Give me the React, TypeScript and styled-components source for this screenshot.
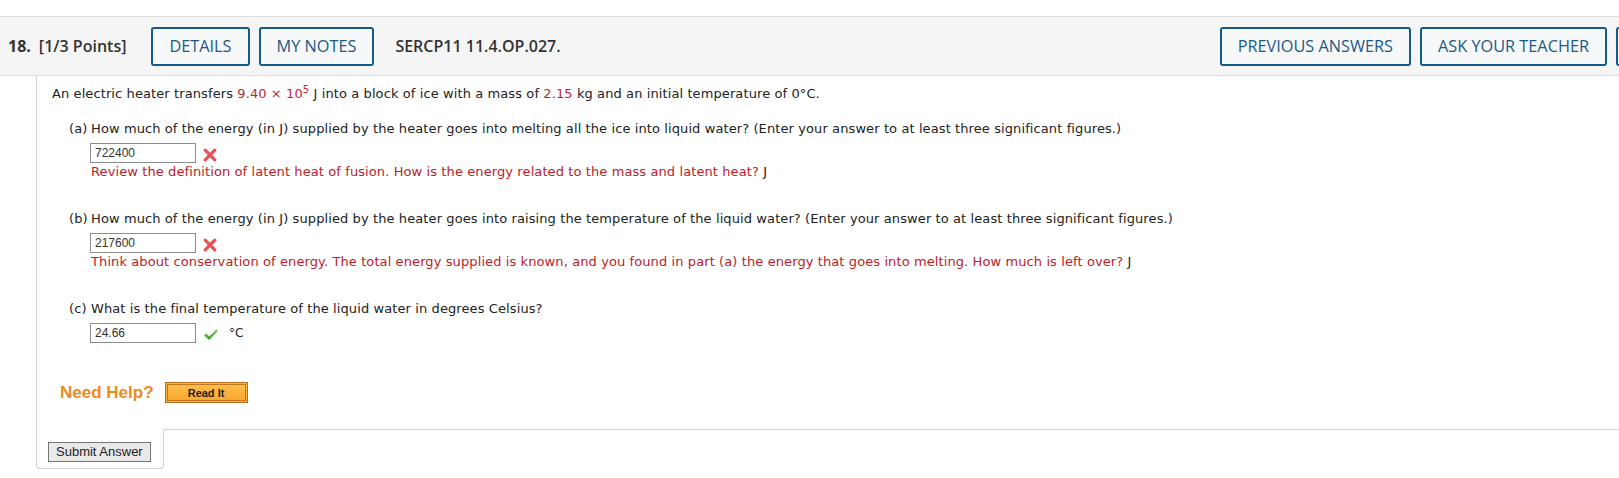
import { FC } from "react";
import styled, { createGlobalStyle } from "styled-components";

const GlobalStyle = createGlobalStyle`
  html, body {
    margin: 0;
    padding: 0;
    background: #ffffff;
  }
  body {
    font-family: "DejaVu Sans", Verdana, sans-serif;
    color: #222;
  }
`;

type Part = {
  label: string;
  question: string;
  value: string;
  correct: boolean;
  unit?: string;
  feedback?: string;
};

const parts: Part[] = [
  {
    label: "(a)",
    question:
      "How much of the energy (in J) supplied by the heater goes into melting all the ice into liquid water? (Enter your answer to at least three significant figures.)",
    value: "722400",
    correct: false,
    feedback:
      "Review the definition of latent heat of fusion. How is the energy related to the mass and latent heat?",
    unit: "J",
  },
  {
    label: "(b)",
    question:
      "How much of the energy (in J) supplied by the heater goes into raising the temperature of the liquid water? (Enter your answer to at least three significant figures.)",
    value: "217600",
    correct: false,
    feedback:
      "Think about conservation of energy. The total energy supplied is known, and you found in part (a) the energy that goes into melting. How much is left over?",
    unit: "J",
  },
  {
    label: "(c)",
    question: "What is the final temperature of the liquid water in degrees Celsius?",
    value: "24.66",
    correct: true,
    unit: "°C",
  },
];

const CrossIcon: FC = () => (
  <svg width="14" height="14" viewBox="0 0 14 14">
    <path
      d="M2.2 2.2 L11.8 11.8 M11.8 2.2 L2.2 11.8"
      stroke="#e65257"
      strokeWidth="3.2"
      strokeLinecap="round"
    />
  </svg>
);

const CheckIcon: FC = () => (
  <svg width="16" height="14" viewBox="0 0 16 14">
    <defs>
      <linearGradient id="chk" x1="0" y1="0" x2="0" y2="1">
        <stop offset="0" stopColor="#86d562" />
        <stop offset="1" stopColor="#3f9a2c" />
      </linearGradient>
    </defs>
    <path
      d="M1 7.5 L3.4 5.4 L6.2 8.2 L13.4 1.2 L15 3 L6.2 12 Z"
      fill="url(#chk)"
    />
  </svg>
);

const App: FC = () => (
  <>
    <GlobalStyle />
    <Page>
      <Header>
        <Number>18.</Number>
        <Points>[1/3 Points]</Points>
        <HeaderButton>DETAILS</HeaderButton>
        <HeaderButton>MY NOTES</HeaderButton>
        <Code>SERCP11 11.4.OP.027.</Code>
        <RightGroup>
          <HeaderButton>PREVIOUS ANSWERS</HeaderButton>
          <HeaderButton>ASK YOUR TEACHER</HeaderButton>
          <HeaderButton $width={180}>PRACTICE ANOTHER</HeaderButton>
        </RightGroup>
      </Header>

      <Card>
        <Content>
          <Intro>
            An electric heater transfers <Given>9.40 × 10<sup>5</sup></Given> J
            into a block of ice with a mass of <Given>2.15</Given> kg and an
            initial temperature of 0°C.
          </Intro>

          {parts.map((p) => (
            <PartBlock key={p.label}>
              <Label>{p.label}</Label>
              <div>
                <Question>{p.question}</Question>
                <AnswerRow>
                  <AnswerInput defaultValue={p.value} readOnly />
                  <Mark>{p.correct ? <CheckIcon /> : <CrossIcon />}</Mark>
                  {p.correct && <Unit>{p.unit}</Unit>}
                </AnswerRow>
                {p.feedback && (
                  <Feedback>
                    {p.feedback} <FeedbackUnit>{p.unit}</FeedbackUnit>
                  </Feedback>
                )}
              </div>
            </PartBlock>
          ))}

          <HelpRow>
            <HelpTitle>Need Help?</HelpTitle>
            <ReadIt>
              <ReadItInner>Read It</ReadItInner>
            </ReadIt>
          </HelpRow>
        </Content>

        <Footer>
          <SubmitTab>
            <SubmitButton>Submit Answer</SubmitButton>
          </SubmitTab>
          <FooterRest />
        </Footer>
      </Card>
    </Page>
  </>
);

export default App;

const Page = styled.div`
  width: 1619px;
  height: 478px;
  overflow: hidden;
  padding-top: 16px;
  box-sizing: border-box;
`;

const Header = styled.div`
  display: flex;
  align-items: center;
  height: 58px;
  background: #f5f5f5;
  border-top: 1px solid #dedede;
  border-bottom: 1px solid #dedede;
  padding-left: 8px;
  overflow: hidden;
  font-family: "Open Sans", sans-serif;
  font-size: 16px;
  font-weight: 600;
  color: #333;
`;

const Number = styled.span`
  font-weight: 700;
  margin-right: 8px;
`;

const Points = styled.span`
  margin-right: 25px;
`;

const HeaderButton = styled.button<{ $width?: number }>`
  flex-shrink: 0;
  height: 39px;
  width: ${(p) => (p.$width ? `${p.$width}px` : "auto")};
  padding: 0 16px;
  margin-right: 9px;
  border: 2px solid #135c89;
  border-radius: 3px;
  background: #f7f8f9;
  font-family: "Open Sans", sans-serif;
  font-size: 16.3px;
  font-weight: 500;
  color: #1b5a87;
  white-space: nowrap;
`;

const Code = styled.span`
  margin-left: 12px;
  white-space: nowrap;
`;

const RightGroup = styled.div`
  display: flex;
  margin-left: auto;
  margin-right: -186px;
  flex-shrink: 0;
`;

const Card = styled.div`
  margin-left: 36px;
`;

const Content = styled.div`
  border-left: 1px solid #d2d2d2;
  padding: 10px 0 26px 15px;
  font-family: "DejaVu Sans", Verdana, sans-serif;
  font-size: 13px;
  line-height: 16px;
  letter-spacing: 0.1px;
  color: #222;
`;

const Intro = styled.p`
  margin: 0;

  sup {
    font-size: 10px;
    line-height: 0;
    vertical-align: 5px;
  }
`;

const Given = styled.span`
  color: #c1272d;
`;

const PartBlock = styled.div`
  display: grid;
  grid-template-columns: 22px 1fr;
  margin-top: 19px;
  margin-left: 17px;

  & + & {
    margin-top: 30px;
  }
`;

const Label = styled.span``;

const Question = styled.div``;

const AnswerRow = styled.div`
  display: flex;
  align-items: center;
  margin-top: 6px;
  margin-left: -1px;
  letter-spacing: 0;
`;

const AnswerInput = styled.input`
  width: 106px;
  height: 20px;
  box-sizing: border-box;
  border: 1px solid #8c8c8c;
  padding: 0 4px;
  font-family: "Liberation Sans", Arial, sans-serif;
  font-size: 12px;
  color: #333;
  outline: none;
`;

const Mark = styled.span`
  display: flex;
  margin-left: 7px;
  margin-top: 3px;
`;

const Unit = styled.span`
  margin-left: 10px;
  font-size: 12px;
`;

const Feedback = styled.div`
  color: #bb2229;
  line-height: 18px;
`;

const FeedbackUnit = styled.span`
  color: #222;
`;

const HelpRow = styled.div`
  display: flex;
  align-items: center;
  gap: 11px;
  margin-top: 39px;
  margin-left: 8px;
  letter-spacing: 0;
`;

const HelpTitle = styled.span`
  font-family: "Liberation Sans", Arial, sans-serif;
  font-size: 17px;
  font-weight: 700;
  color: #ef8a1f;
`;

const ReadIt = styled.button`
  width: 83px;
  height: 21px;
  padding: 1px;
  border: 1px solid #b86d1c;
  background: #fbb13c;
  display: flex;
`;

const ReadItInner = styled.span`
  flex: 1;
  display: flex;
  align-items: center;
  justify-content: center;
  border: 1px solid #c5751c;
  background: linear-gradient(#fcbd4c, #f9a92e);
  font-family: "Liberation Sans", Arial, sans-serif;
  font-size: 11px;
  font-weight: 700;
  color: #222;
`;

const Footer = styled.div`
  display: flex;
`;

const SubmitTab = styled.div`
  width: 128px;
  height: 40px;
  box-sizing: border-box;
  padding: 12px 0 0 11px;
  border-left: 1px solid #d2d2d2;
  border-right: 1px solid #d2d2d2;
  border-bottom: 1px solid #d2d2d2;
  border-radius: 0 0 4px 4px;
`;

const FooterRest = styled.div`
  flex: 1;
  border-top: 1px solid #d2d2d2;
`;

const SubmitButton = styled.button`
  height: 20px;
  padding: 0 7px;
  border: 1px solid #767676;
  background: #e9e9e9;
  font-family: "Liberation Sans", Arial, sans-serif;
  font-size: 13px;
  color: #222;
`;
